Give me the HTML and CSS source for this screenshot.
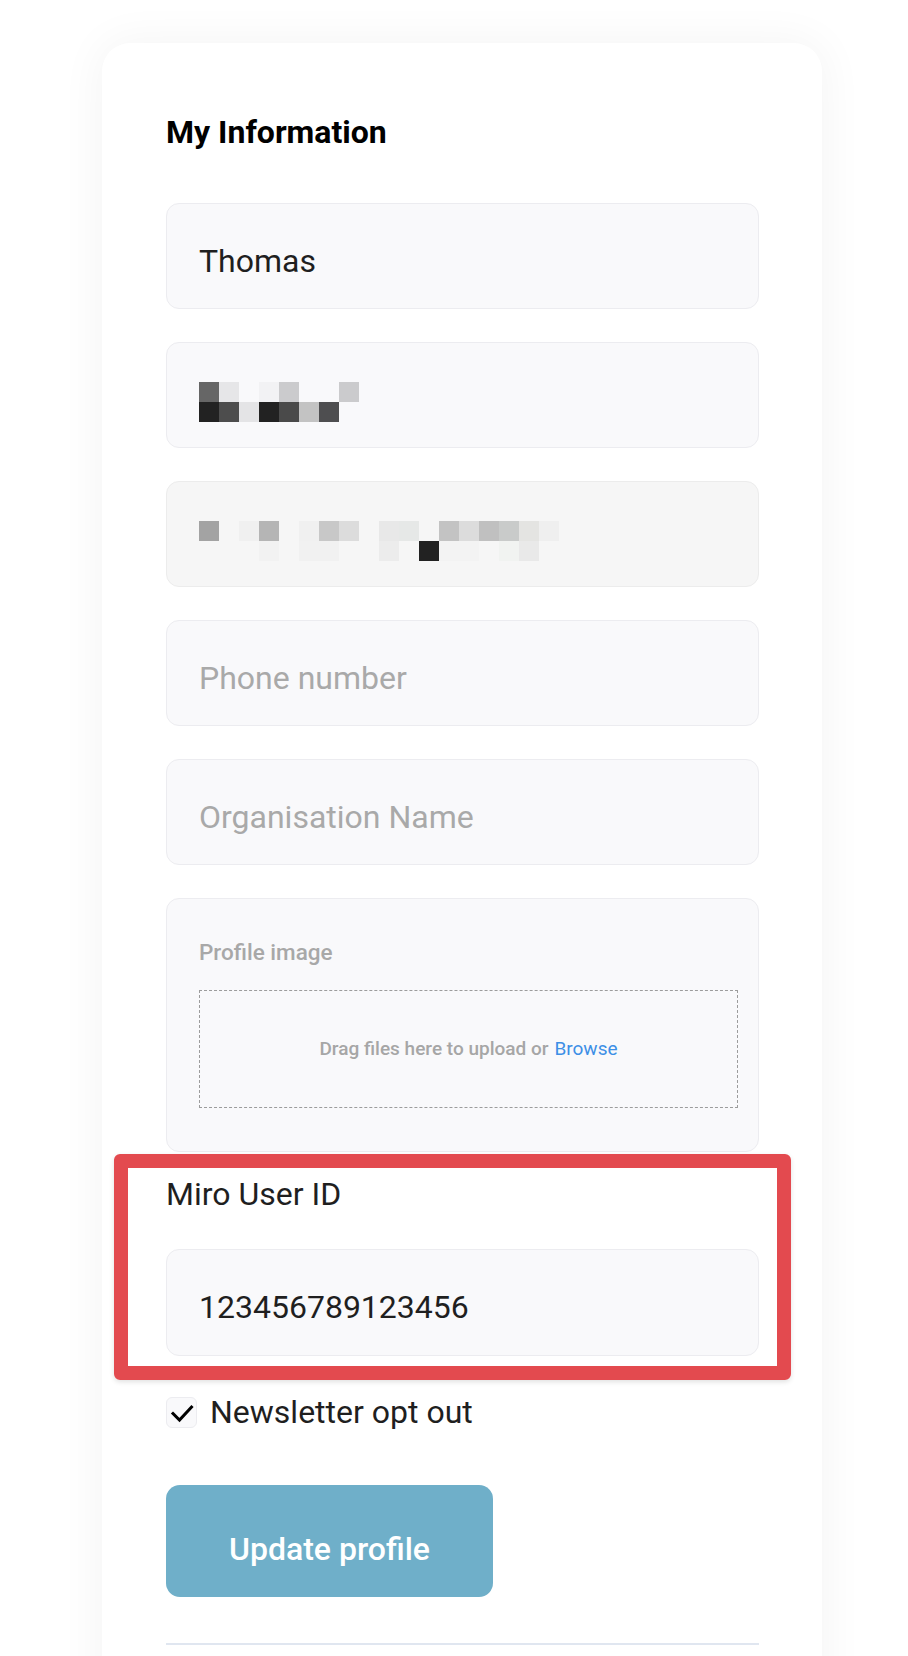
FILE: index.html
```html
<!DOCTYPE html>
<html lang="en">
<head>
<meta charset="utf-8">
<title>My Information</title>
<link rel="stylesheet" href="styles.css">
</head>
<body>
<main class="card">
  <h1 class="title">My Information</h1>
  <div class="fields">
    <div class="field">Thomas</div>
    <div class="field field-mosaic">
      <svg class="mosaic" width="180" height="40" viewBox="0 0 180 40" aria-hidden="true">
        <rect x="0" y="0" width="20" height="20" fill="#666666"/>
        <rect x="20" y="0" width="20" height="20" fill="#e6e6e8"/>
        <rect x="60" y="0" width="20" height="20" fill="#f2f2f4"/>
        <rect x="80" y="0" width="20" height="20" fill="#cbcbcd"/>
        <rect x="140" y="0" width="20" height="20" fill="#cbcbcd"/>
        <rect x="0" y="20" width="20" height="20" fill="#222222"/>
        <rect x="20" y="20" width="20" height="20" fill="#4d4d4d"/>
        <rect x="40" y="20" width="20" height="20" fill="#e4e4e6"/>
        <rect x="60" y="20" width="20" height="20" fill="#222222"/>
        <rect x="80" y="20" width="20" height="20" fill="#4a4a4a"/>
        <rect x="100" y="20" width="20" height="20" fill="#c3c3c3"/>
        <rect x="120" y="20" width="20" height="20" fill="#4e4e50"/>
      </svg>
    </div>
    <div class="field field-disabled field-mosaic">
      <svg class="mosaic" width="360" height="40" viewBox="0 0 360 40" aria-hidden="true">
        <rect x="0" y="0" width="20" height="20" fill="#a3a3a3"/>
        <rect x="40" y="0" width="20" height="20" fill="#f0f0f0"/>
        <rect x="60" y="0" width="20" height="20" fill="#b5b5b5"/>
        <rect x="100" y="0" width="20" height="20" fill="#f0f0f0"/>
        <rect x="120" y="0" width="20" height="20" fill="#c8c8c8"/>
        <rect x="140" y="0" width="20" height="20" fill="#dcdcdc"/>
        <rect x="180" y="0" width="20" height="20" fill="#e8e8e8"/>
        <rect x="200" y="0" width="20" height="20" fill="#e6e8e7"/>
        <rect x="240" y="0" width="20" height="20" fill="#c3c3c3"/>
        <rect x="260" y="0" width="20" height="20" fill="#dcdcdc"/>
        <rect x="280" y="0" width="20" height="20" fill="#c0c0c0"/>
        <rect x="300" y="0" width="20" height="20" fill="#c9cbca"/>
        <rect x="320" y="0" width="20" height="20" fill="#e4e4e2"/>
        <rect x="340" y="0" width="20" height="20" fill="#efefef"/>
        <rect x="60" y="20" width="20" height="20" fill="#f2f2f2"/>
        <rect x="100" y="20" width="20" height="20" fill="#f1f1f1"/>
        <rect x="120" y="20" width="20" height="20" fill="#f1f1f1"/>
        <rect x="180" y="20" width="20" height="20" fill="#ececec"/>
        <rect x="220" y="20" width="20" height="20" fill="#222222"/>
        <rect x="240" y="20" width="20" height="20" fill="#f3f3f3"/>
        <rect x="260" y="20" width="20" height="20" fill="#f3f3f3"/>
        <rect x="300" y="20" width="20" height="20" fill="#f1f3f1"/>
        <rect x="320" y="20" width="20" height="20" fill="#e9e9e9"/>
      </svg>
    </div>
    <div class="field placeholder">Phone number</div>
    <div class="field placeholder">Organisation Name</div>
    <div class="field upload">
      <div class="upload-label">Profile image</div>
      <div class="dropzone">
        <span class="drop-text">Drag files here to upload or</span>
        <span class="browse">Browse</span>
      </div>
    </div>
  </div>

  <section class="miro">
    <div class="miro-label">Miro User ID</div>
    <div class="field miro-field">123456789123456</div>
    <div class="highlight"></div>
  </section>

  <label class="check-row">
    <span class="checkbox">
      <svg width="29" height="29" viewBox="0 0 29 29" aria-hidden="true">
        <polyline points="6,15.5 12.5,22 24.5,9" fill="none" stroke="#000" stroke-width="3" stroke-linecap="square" stroke-linejoin="miter"/>
      </svg>
    </span>
    <span class="check-text">Newsletter opt out</span>
  </label>

  <button class="submit" type="button">Update profile</button>

  <hr class="divider">
</main>
</body>
</html>
```

FILE: styles.css
```css
html, body {
  margin: 0;
  padding: 0;
  background: #ffffff;
}

body {
  font-family: Roboto, "Liberation Sans", Arial, sans-serif;
  color: #1f1f1f;
  overflow: hidden;
}

.card {
  box-sizing: border-box;
  position: relative;
  width: 720px;
  margin: 43px 0 0 102px;
  padding: 71px 63px 80px 64px;
  background: #ffffff;
  border-radius: 28px;
  box-shadow: 0 0 44px 4px rgba(0, 0, 0, 0.045);
}

.title {
  margin: 0 0 53px;
  font-size: 32px;
  line-height: 36px;
  font-weight: 700;
  color: #000000;
}

.fields {
  display: flex;
  flex-direction: column;
  gap: 33px;
}

.field {
  box-sizing: border-box;
  height: 106px;
  padding: 37px 32px 27px;
  font-size: 32px;
  line-height: 40px;
  color: #1f1f1f;
  background: #f9f9fb;
  border: 1px solid #ececf0;
  border-radius: 13px;
}

.field-disabled {
  background: #f6f6f6;
  border-color: #ececec;
}

.mosaic {
  display: block;
  margin-top: 2px;
}

.placeholder {
  color: #a9a9a9;
}

.upload {
  height: auto;
  padding: 40px 20px 43px 32px;
}

.upload-label {
  font-size: 22.5px;
  line-height: 26px;
  font-weight: 500;
  color: #a8a8a8;
  margin-bottom: 25px;
}

.dropzone {
  box-sizing: border-box;
  height: 118px;
  border: 1px dashed #9c9c9c;
  display: flex;
  align-items: center;
  justify-content: center;
  gap: 6px;
  font-size: 19px;
  line-height: 24px;
}

.drop-text {
  color: #a6a6a6;
  font-weight: 500;
}

.browse {
  color: #3d8fe6;
}

.miro {
  position: relative;
  margin-top: 24px;
}

.miro-label {
  font-size: 32px;
  line-height: 36px;
  color: #1f1f1f;
  margin-bottom: 37px;
}

.miro-field {
  height: 107px;
  padding-bottom: 28px;
}

.highlight {
  position: absolute;
  top: -22px;
  left: -52px;
  right: -32px;
  bottom: -24px;
  border: 14px solid #e34a4f;
  border-radius: 6px;
  box-shadow: 0 2px 5px rgba(0, 0, 0, 0.12);
  pointer-events: none;
}

.check-row {
  display: flex;
  align-items: center;
  gap: 13px;
  margin-top: 36px;
}

.checkbox {
  box-sizing: border-box;
  width: 31px;
  height: 31px;
  background: #f9f9fb;
  border: 1px solid #ececf0;
  border-radius: 6px;
  display: flex;
  align-items: center;
  justify-content: center;
}

.checkbox svg {
  display: block;
}

.check-text {
  font-size: 32px;
  line-height: 40px;
  color: #1f1f1f;
}

.submit {
  display: block;
  box-sizing: border-box;
  width: 327px;
  height: 112px;
  margin-top: 53px;
  padding: 44px 0 28px;
  border: none;
  border-radius: 14px;
  background: #6fafc9;
  color: #ffffff;
  font-family: Roboto, "Liberation Sans", Arial, sans-serif;
  font-size: 32px;
  line-height: 40px;
  font-weight: 500;
  text-align: center;
}

.divider {
  margin: 46px 0 0;
  height: 2px;
  border: none;
  background: #e0e6f0;
}
```
